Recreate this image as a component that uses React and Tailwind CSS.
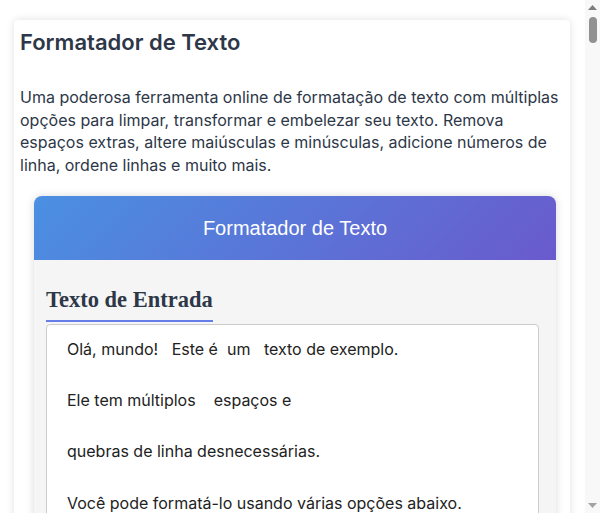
export default function App() {
  const sample = `Olá, mundo!   Este é  um   texto de exemplo.

Ele tem múltiplos    espaços e

quebras de linha desnecessárias.

Você pode formatá-lo usando várias opções abaixo.`;

  return (
    <div className="h-[513px] flex bg-white overflow-hidden" style={{ fontFamily: "Inter, 'Noto Sans', sans-serif" }}>
      {/* page content */}
      <div className="flex-1 min-w-0 pt-[20px] pl-[14px] pr-[15px]">
        <div className="bg-white rounded-[4px] shadow-[0_0_8px_rgba(0,0,0,0.12)] px-[6px] pt-[8px] pb-[20px]">
          <h1 className="text-[22px] leading-[28px] font-semibold text-[#2d3748]">Formatador de Texto</h1>
          <p className="mt-[30px] text-[16px] leading-[22.5px] text-[#2d3748]">
            Uma poderosa ferramenta online de formatação de texto com múltiplas opções para limpar, transformar e embelezar seu texto. Remova espaços extras, altere maiúsculas e minúsculas, adicione números de linha, ordene linhas e muito mais.
          </p>
          <div className="mt-[20px] ml-[14px] w-[522px] rounded-[8px] overflow-hidden shadow-[0_0_8px_rgba(0,0,0,0.15)] bg-[#f5f5f5]">
            <div className="h-[64px] flex items-center justify-center bg-[linear-gradient(135deg,#4a90e2,#6a5acd)]">
              <span className="text-white text-[20px]" style={{ fontFamily: "'Liberation Sans', Arial, sans-serif" }}>Formatador de Texto</span>
            </div>
            <div className="px-[12px] pt-[26px] pb-[20px]">
              <h2 className="inline-block text-[22.5px] leading-[28px] font-bold text-[#2d3748] border-b-2 border-[#667eea] pb-[6px]" style={{ fontFamily: "'Liberation Serif', 'DejaVu Serif', serif" }}>
                Texto de Entrada
              </h2>
              <textarea
                readOnly
                value={sample}
                className="block mt-[2px] w-[493px] h-[300px] bg-white border border-[#ccc] rounded-[4px] px-[20px] py-[12px] text-[16px] leading-[25.6px] text-[#222] resize-none outline-none"
                style={{ fontFamily: "Inter, 'Noto Sans', sans-serif" }}
              />
            </div>
          </div>
        </div>
      </div>

      {/* window scrollbar */}
      <div className="w-[15px] shrink-0 bg-[#f8f8f8] flex flex-col items-center">
        <div className="h-[15px] w-full flex items-center justify-center">
          <svg width="9" height="5" viewBox="0 0 9 5"><path d="M0 5 L4.5 0 L9 5 Z" fill="#7d7d7d" /></svg>
        </div>
        <div className="mt-[2px] w-[8px] h-[26px] rounded-full bg-[#919191]" />
        <div className="flex-1" />
        <div className="h-[15px] w-full flex items-center justify-center">
          <svg width="9" height="5" viewBox="0 0 9 5"><path d="M0 0 L9 0 L4.5 5 Z" fill="#a3a3a3" /></svg>
        </div>
      </div>
    </div>
  );
}
